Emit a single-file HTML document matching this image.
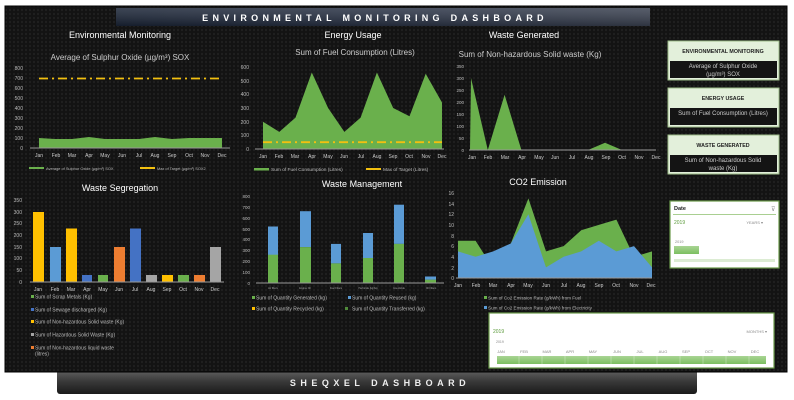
<!DOCTYPE html>
<html><head><meta charset="utf-8"><style>
html,body{margin:0;padding:0;background:#fff;}
svg{display:block;font-family:"Liberation Sans",sans-serif;}
</style></head><body>
<svg width="794" height="400" viewBox="0 0 794 400" xmlns="http://www.w3.org/2000/svg">
<defs>
<pattern id="tex" width="4" height="4" patternUnits="userSpaceOnUse">
<rect width="4" height="4" fill="#131313"/><circle cx="2" cy="2" r="1.1" fill="#202020"/>
</pattern>
<linearGradient id="hdr" x1="0" y1="0" x2="1" y2="0">
<stop offset="0" stop-color="#1a2436"/><stop offset="0.5" stop-color="#2a3346"/><stop offset="1" stop-color="#3a4150"/>
</linearGradient>
<linearGradient id="hdrv" x1="0" y1="0" x2="0" y2="1">
<stop offset="0" stop-color="#fff" stop-opacity="0.15"/><stop offset="1" stop-color="#000" stop-opacity="0.2"/>
</linearGradient>
<linearGradient id="bot" x1="0" y1="0" x2="0" y2="1">
<stop offset="0" stop-color="#6a6a6a"/><stop offset="0.5" stop-color="#3a3a3a"/><stop offset="1" stop-color="#1a1a1a"/>
</linearGradient>
<linearGradient id="gbar" x1="0" y1="0" x2="0" y2="1">
<stop offset="0" stop-color="#a9d494"/><stop offset="1" stop-color="#7cbf60"/>
</linearGradient>
</defs>
<rect width="794" height="400" fill="#fff"/>
<rect x="57" y="368" width="640" height="26" rx="3" fill="url(#bot)"/>
<text x="380" y="386" fill="#eee" font-size="9" font-weight="bold" letter-spacing="4.5" text-anchor="middle">SHEQXEL DASHBOARD</text>
<rect x="5" y="6" width="782" height="366" fill="url(#tex)"/>
<rect x="5" y="6" width="782" height="366" fill="none" stroke="#000" stroke-width="1"/>
<rect x="116" y="8" width="534" height="18" fill="url(#hdr)"/>
<rect x="116" y="8" width="534" height="18" fill="url(#hdrv)"/>
<text x="375" y="21" fill="#fff" font-size="9" font-weight="bold" letter-spacing="4.3" text-anchor="middle">ENVIRONMENTAL MONITORING DASHBOARD</text>

<g fill="#fff" text-anchor="middle">
<text x="120" y="38" font-size="9">Environmental Monitoring</text>
<text x="120" y="60" font-size="8" fill="#ccc">Average of Sulphur Oxide (µg/m³) SOX</text>
<text x="353" y="38" font-size="9">Energy Usage</text>
<text x="355" y="55" font-size="8" fill="#ccc">Sum of Fuel Consumption (Litres)</text>
<text x="524" y="38" font-size="9">Waste Generated</text>
<text x="530" y="57" font-size="8" fill="#ccc">Sum of Non-hazardous Solid waste (Kg)</text>
<text x="120" y="191" font-size="9">Waste Segregation</text>
<text x="362" y="187" font-size="9">Waste Management</text>
<text x="538" y="185" font-size="9">CO2 Emission</text>
</g>

<!-- Env monitoring -->
<g font-size="5" fill="#bbb" text-anchor="end">
<text x="23" y="70">800</text><text x="23" y="80">700</text><text x="23" y="90">600</text><text x="23" y="100">500</text><text x="23" y="110">400</text><text x="23" y="120">300</text><text x="23" y="130">200</text><text x="23" y="140">100</text><text x="23" y="150">0</text>
</g>
<path d="M39,148 L39,138 L55,139 L72,139 L89,137 L105,139 L122,139 L139,139 L155,137 L172,139 L189,138 L205,138 L222,138 L222,148Z" fill="#6ab04c"/>
<line x1="30" y1="148" x2="230" y2="148" stroke="#999" stroke-width="1"/>
<line x1="39" y1="78.5" x2="222" y2="78.5" stroke="#f2c010" stroke-width="1.8" stroke-dasharray="9,4,2,4"/>
<g font-size="5" fill="#ccc" text-anchor="middle">
<text x="39" y="157">Jan</text><text x="56" y="157">Feb</text><text x="72" y="157">Mar</text><text x="89" y="157">Apr</text><text x="105" y="157">May</text><text x="122" y="157">Jun</text><text x="139" y="157">Jul</text><text x="155" y="157">Aug</text><text x="172" y="157">Sep</text><text x="189" y="157">Oct</text><text x="205" y="157">Nov</text><text x="222" y="157">Dec</text>
</g>
<rect x="29" y="167" width="15" height="2" fill="#6ab04c"/><text x="46" y="170" font-size="3.9" fill="#bbb">Average of Sulphur Oxide (µg/m³) SOX</text>
<rect x="140" y="167" width="15" height="2" fill="#f2c010"/><text x="157" y="170" font-size="3.9" fill="#bbb">Max of Target (µg/m³) SOX2</text>

<!-- Energy -->
<g font-size="5" fill="#bbb" text-anchor="end">
<text x="249" y="69">600</text><text x="249" y="83">500</text><text x="249" y="96">400</text><text x="249" y="110">300</text><text x="249" y="124">200</text><text x="249" y="137">100</text><text x="249" y="151">0</text>
</g>
<path d="M263,149 L263,121.7 L279.3,131.9 L295.5,117.6 L311.8,72.5 L328.1,108 L344.4,131.9 L360.6,117.6 L376.9,72.5 L393.2,108 L409.5,116.2 L425.7,73.8 L442,102.5 L442,149Z" fill="#6ab04c"/>
<line x1="255" y1="149" x2="444" y2="149" stroke="#999"/>
<line x1="263" y1="142.2" x2="442" y2="142.2" stroke="#f2c010" stroke-width="1.8" stroke-dasharray="9,4,2,4"/>
<g font-size="5" fill="#ccc" text-anchor="middle">
<text x="263" y="158">Jan</text><text x="279" y="158">Feb</text><text x="295" y="158">Mar</text><text x="312" y="158">Apr</text><text x="328" y="158">May</text><text x="344" y="158">Jun</text><text x="361" y="158">Jul</text><text x="377" y="158">Aug</text><text x="393" y="158">Sep</text><text x="409" y="158">Oct</text><text x="426" y="158">Nov</text><text x="442" y="158">Dec</text>
</g>
<rect x="254" y="168" width="15" height="2.5" fill="#6ab04c"/><text x="271" y="171" font-size="4.8" fill="#bbb">Sum of Fuel Consumption (Litres)</text>
<rect x="366" y="168" width="15" height="2" fill="#f2c010"/><text x="383" y="171" font-size="4.8" fill="#bbb">Max of Target (Litres)</text>

<!-- Waste generated -->
<g font-size="4.5" fill="#bbb" text-anchor="end">
<text x="464" y="68">350</text><text x="464" y="80">300</text><text x="464" y="92">250</text><text x="464" y="104">200</text><text x="464" y="116">150</text><text x="464" y="128">100</text><text x="464" y="140">50</text><text x="464" y="152">0</text>
</g>
<path d="M470,150 L471,78 L487.8,150 L504.6,94.8 L521.4,150 L588,150 L605,142.8 L622,150Z" fill="#6ab04c"/>
<line x1="469" y1="150" x2="656" y2="150" stroke="#999"/>
<g font-size="5" fill="#ccc" text-anchor="middle">
<text x="472" y="159">Jan</text><text x="488" y="159">Feb</text><text x="505" y="159">Mar</text><text x="522" y="159">Apr</text><text x="539" y="159">May</text><text x="555" y="159">Jun</text><text x="572" y="159">Jul</text><text x="589" y="159">Aug</text><text x="606" y="159">Sep</text><text x="622" y="159">Oct</text><text x="639" y="159">Nov</text><text x="656" y="159">Dec</text>
</g>

<!-- Right boxes -->
<g font-size="6" text-anchor="middle">
<rect x="668" y="41" width="111" height="39" fill="#e3f0db" stroke="#9cbc88"/>
<rect x="670" y="61" width="107" height="17" fill="#141414"/>
<text x="723" y="53" font-size="5.3" font-weight="bold" fill="#222">ENVIRONMENTAL MONITORING</text>
<text x="723" y="68" fill="#ccc">Average of Sulphur Oxide</text><text x="723" y="76" fill="#ccc">(µg/m³) SOX</text>
<rect x="668" y="88" width="111" height="39" fill="#e3f0db" stroke="#9cbc88"/>
<rect x="670" y="108" width="107" height="17" fill="#141414"/>
<text x="723" y="100" font-size="5.3" font-weight="bold" fill="#222">ENERGY USAGE</text>
<text x="723" y="115" fill="#ccc">Sum of Fuel Consumption (Litres)</text>
<rect x="668" y="135" width="111" height="39" fill="#e3f0db" stroke="#9cbc88"/>
<rect x="670" y="155" width="107" height="17" fill="#141414"/>
<text x="723" y="147" font-size="5.3" font-weight="bold" fill="#222">WASTE GENERATED</text>
<text x="723" y="162" fill="#ccc">Sum of Non-hazardous Solid</text><text x="723" y="170" fill="#ccc">waste (Kg)</text>
</g>

<!-- Waste segregation -->
<g font-size="5" fill="#bbb" text-anchor="end">
<text x="22" y="202">350</text><text x="22" y="214">300</text><text x="22" y="225">250</text><text x="22" y="237">200</text><text x="22" y="249">150</text><text x="22" y="260">100</text><text x="22" y="272">50</text><text x="22" y="284">0</text>
</g>
<rect x="33" y="212" width="11" height="70" fill="#ffc000"/>
<rect x="50" y="247" width="11" height="35" fill="#5b9bd5"/>
<rect x="66" y="228.5" width="11" height="53.5" fill="#ffc000"/>
<rect x="82" y="275" width="10" height="7" fill="#4472c4"/>
<rect x="98" y="275" width="10" height="7" fill="#6ab04c"/>
<rect x="114" y="247" width="11" height="35" fill="#ed7d31"/>
<rect x="130" y="228.5" width="11" height="53.5" fill="#4472c4"/>
<rect x="146" y="275" width="11" height="7" fill="#a5a5a5"/>
<rect x="162" y="275" width="11" height="7" fill="#ffc000"/>
<rect x="178" y="275" width="11" height="7" fill="#6ab04c"/>
<rect x="194" y="275" width="11" height="7" fill="#ed7d31"/>
<rect x="210" y="247" width="11" height="35" fill="#a5a5a5"/>
<line x1="30" y1="282" x2="224" y2="282" stroke="#999"/>
<g font-size="5" fill="#ccc" text-anchor="middle">
<text x="38" y="291">Jan</text><text x="55" y="291">Feb</text><text x="71" y="291">Mar</text><text x="87" y="291">Apr</text><text x="103" y="291">May</text><text x="119" y="291">Jun</text><text x="135" y="291">Jul</text><text x="151" y="291">Aug</text><text x="167" y="291">Sep</text><text x="183" y="291">Oct</text><text x="199" y="291">Nov</text><text x="215" y="291">Dec</text>
</g>
<g font-size="5" fill="#bbb">
<rect x="31" y="295" width="3" height="3" fill="#6ab04c"/><text x="35" y="298.5">Sum of Scrap Metals (Kg)</text>
<rect x="31" y="308" width="3" height="3" fill="#4472c4"/><text x="35" y="311.5">Sum of Sewage discharged (Kg)</text>
<rect x="31" y="320" width="3" height="3" fill="#ffc000"/><text x="35" y="323.5">Sum of Non-hazardous Solid waste (Kg)</text>
<rect x="31" y="333" width="3" height="3" fill="#a5a5a5"/><text x="35" y="336.5">Sum of Hazardous Solid Waste (Kg)</text>
<rect x="31" y="346" width="3" height="3" fill="#ed7d31"/><text x="35" y="349.5">Sum of Non-hazardous liquid waste</text><text x="35" y="355.5">(litres)</text>
</g>

<!-- Waste management -->
<g font-size="4.5" fill="#bbb" text-anchor="end">
<text x="250" y="198">800</text><text x="250" y="209">700</text><text x="250" y="220">600</text><text x="250" y="231">500</text><text x="250" y="241">400</text><text x="250" y="252">300</text><text x="250" y="263">200</text><text x="250" y="274">100</text><text x="250" y="285">0</text>
</g>
<g>
<rect x="268" y="226.5" width="10" height="28.5" fill="#5b9bd5"/><rect x="268" y="254.7" width="10" height="28.3" fill="#6ab04c"/>
<rect x="300" y="211.2" width="11" height="35.9" fill="#5b9bd5"/><rect x="300" y="247.1" width="11" height="35.9" fill="#6ab04c"/>
<rect x="331" y="243.9" width="10" height="19.5" fill="#5b9bd5"/><rect x="331" y="263.4" width="10" height="19.6" fill="#6ab04c"/>
<rect x="363" y="233" width="10" height="25" fill="#5b9bd5"/><rect x="363" y="258" width="10" height="25" fill="#6ab04c"/>
<rect x="394" y="204.7" width="10" height="39.2" fill="#5b9bd5"/><rect x="394" y="243.9" width="10" height="39.1" fill="#6ab04c"/>
<rect x="425" y="276.5" width="11" height="3.3" fill="#5b9bd5"/><rect x="425" y="279.7" width="11" height="3.3" fill="#6ab04c"/>
</g>
<line x1="256" y1="283" x2="444" y2="283" stroke="#999"/>
<g font-size="2.5" fill="#aaa" text-anchor="middle">
<text x="273" y="289">Air filters</text><text x="305" y="289">Engine Oil</text><text x="336" y="289">Fuel Filters</text><text x="368" y="289">Herbicide (kg/ha)</text><text x="399" y="289">Insecticide</text><text x="431" y="289">Oil Filters</text>
</g>
<g font-size="5" fill="#bbb">
<rect x="252" y="296" width="3" height="3" fill="#6ab04c"/><text x="256" y="299.5">Sum of Quantity Generated (kg)</text>
<rect x="348" y="296" width="3" height="3" fill="#5b9bd5"/><text x="352" y="299.5">Sum of Quantity Reused (kg)</text>
<rect x="252" y="307" width="3" height="3" fill="#ffc000"/><text x="256" y="310.5">Sum of Quantity Recycled (kg)</text>
<rect x="345" y="307" width="3" height="3" fill="#4f8a3a"/><text x="352" y="310.5">Sum of Quantity Transferred (kg)</text>
</g>

<!-- CO2 -->
<g font-size="5" fill="#bbb" text-anchor="end">
<text x="454" y="195">16</text><text x="454" y="206">14</text><text x="454" y="216">12</text><text x="454" y="227">10</text><text x="454" y="238">8</text><text x="454" y="248">6</text><text x="454" y="259">4</text><text x="454" y="270">2</text><text x="454" y="280">0</text>
</g>
<path d="M458,278 L458,240.8 L475.6,240.8 L484,254 L493.2,254 L510.8,243.5 L528.4,198.4 L546,251.4 L563.6,246.1 L581.2,230.2 L598.8,224.9 L616.4,219.6 L634,256.8 L652,251.4 L652,278Z" fill="#6ab04c"/>
<path d="M458,278 L458,251.4 L475.6,256.8 L493.2,251.4 L510.8,243.5 L528.4,214.3 L546,267.4 L563.6,256.8 L581.2,251.4 L598.8,240.8 L616.4,251.4 L634,246.1 L652,267.4 L652,278Z" fill="#5b9bd5"/>
<line x1="456" y1="278" x2="652" y2="278" stroke="#999"/>
<g font-size="5" fill="#ccc" text-anchor="middle">
<text x="458" y="287">Jan</text><text x="476" y="287">Feb</text><text x="493" y="287">Mar</text><text x="511" y="287">Apr</text><text x="528" y="287">May</text><text x="546" y="287">Jun</text><text x="564" y="287">Jul</text><text x="581" y="287">Aug</text><text x="599" y="287">Sep</text><text x="616" y="287">Oct</text><text x="634" y="287">Nov</text><text x="651" y="287">Dec</text>
</g>
<g font-size="4.6" fill="#bbb">
<rect x="484" y="296" width="3" height="3" fill="#6ab04c"/><text x="488" y="299.5">Sum of Co2 Emission Rate (g/kWh) from Fuel</text>
<rect x="484" y="306" width="3" height="3" fill="#5b9bd5"/><text x="488" y="309.5">Sum of Co2 Emission Rate (g/kWh) from Electricity</text>
</g>

<!-- Date slicer -->
<rect x="670" y="201" width="109" height="67" fill="#fff" stroke="#6a9a4a" stroke-width="1.2"/>
<text x="674" y="210" font-size="5.5" font-weight="bold" fill="#222">Date</text>
<text x="771" y="211" font-size="6" fill="#888">⊽</text>
<line x1="673" y1="214.5" x2="776" y2="214.5" stroke="#8cbf6c" stroke-width="0.8"/>
<text x="674" y="224" font-size="5" fill="#5a9a3a">2019</text>
<text x="763" y="224" font-size="4" fill="#888" text-anchor="end">YEARS ▾</text>
<text x="675" y="243" font-size="3.8" fill="#888">2019</text>
<rect x="674" y="246" width="25" height="8" fill="url(#gbar)"/>
<rect x="674" y="259" width="101" height="3" fill="#dcecd3"/>

<!-- Months slicer -->
<rect x="489" y="313" width="285" height="55" fill="#fff" stroke="#6a9a4a" stroke-width="1.2"/>
<text x="493" y="333" font-size="5" fill="#5a9a3a">2019</text>
<text x="767" y="333" font-size="4" fill="#888" text-anchor="end">MONTHS ▾</text>
<text x="496" y="343" font-size="3.5" fill="#888">2019</text>
<g font-size="4" fill="#888" text-anchor="middle">
<text x="501" y="353">JAN</text><text x="524" y="353">FEB</text><text x="547" y="353">MAR</text><text x="570" y="353">APR</text><text x="593" y="353">MAY</text><text x="617" y="353">JUN</text><text x="640" y="353">JUL</text><text x="663" y="353">AUG</text><text x="686" y="353">SEP</text><text x="709" y="353">OCT</text><text x="732" y="353">NOV</text><text x="755" y="353">DEC</text>
</g>
<rect x="497" y="356" width="269" height="8" fill="url(#gbar)"/>
<g stroke="#fff" stroke-width="0.5" stroke-opacity="0.6">
<line x1="519" y1="356" x2="519" y2="364"/><line x1="542" y1="356" x2="542" y2="364"/><line x1="565" y1="356" x2="565" y2="364"/><line x1="588" y1="356" x2="588" y2="364"/><line x1="611" y1="356" x2="611" y2="364"/><line x1="634" y1="356" x2="634" y2="364"/><line x1="657" y1="356" x2="657" y2="364"/><line x1="680" y1="356" x2="680" y2="364"/><line x1="703" y1="356" x2="703" y2="364"/><line x1="726" y1="356" x2="726" y2="364"/><line x1="749" y1="356" x2="749" y2="364"/>
</g>
</svg>
</body></html>
